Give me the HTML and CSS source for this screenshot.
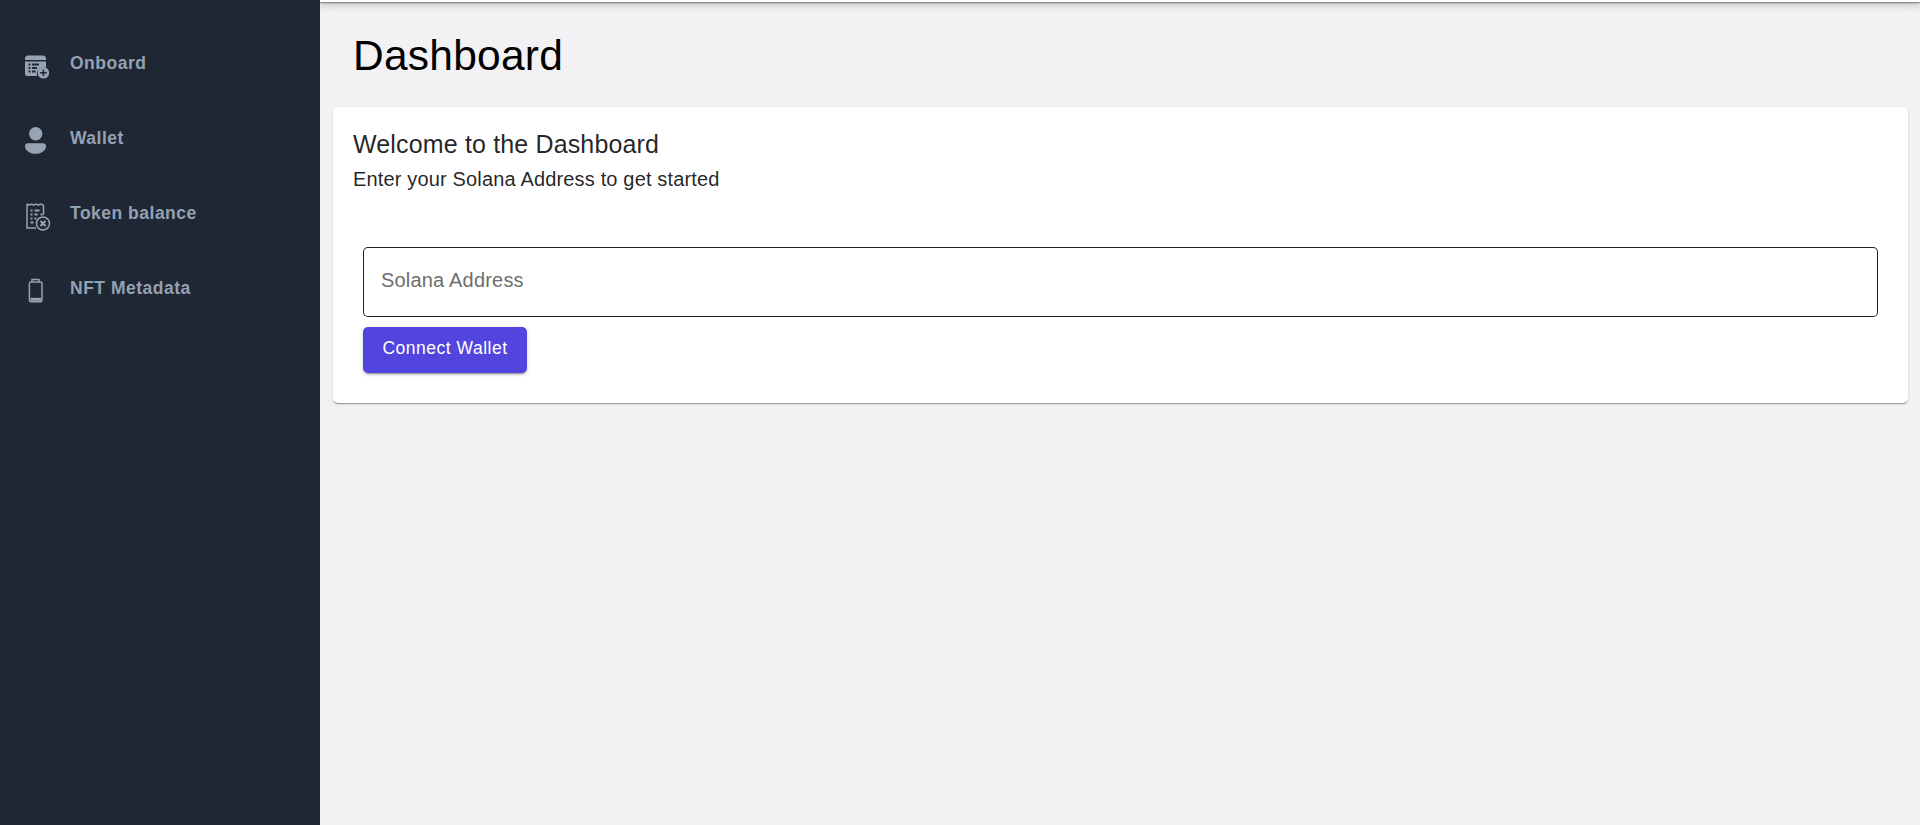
FILE: index.html
```html
<!DOCTYPE html>
<html lang="en">
<head>
<meta charset="utf-8">
<title>Dashboard</title>
<link rel="stylesheet" href="styles.css">
</head>
<body>
<div class="app">
  <nav class="sidebar">
    <a class="nav-item">
      <svg class="nav-icon" viewBox="0 0 26 26"><path class="fill" fill-rule="evenodd" transform="translate(0 1)" d="M1 4.500C1 2.500 2.500 1.500 4 1.500h15c1.500 0 3 1 3 3v1.500H1zM1 7.500h21v6.100a6.800 6.800 0 0 0-8.800 8.400H3c-1.200 0-2-.8-2-2zM4.500 9.500v2h2v-2zm3.500 0v2h7v-2zM4.500 13v2h2v-2zm3.500 0v2h5v-2zM4.500 16.500v2h2v-2zm3.500 0v2h3.500v-2z"/><path class="fill" fill-rule="evenodd" transform="translate(-.6 -.5)" d="M20 14.500a5.800 5.800 0 1 1 0 11.600 5.800 5.800 0 0 1 0-11.600zM19.200 17v2.500H16.700v1.400h2.500v2.600h1.600v-2.600h2.500v-1.400h-2.500V17z"/></svg>
      <span class="nav-label">Onboard</span>
    </a>
    <a class="nav-item">
      <svg class="nav-icon" viewBox="0 0 26 26"><circle class="fill" cx="11.700" cy="5.800" r="6.700"/><path class="fill" d="M4 15.200h15c1.800 0 3 1 3 2.800 0 4.500-4.500 7.800-10.500 7.800S1 22.500 1 18c0-1.800 1.200-2.800 3-2.800z"/></svg>
      <span class="nav-label">Wallet</span>
    </a>
    <a class="nav-item">
      <svg class="nav-icon" viewBox="0 0 26 26"><path class="stroke" d="M3 1v24h9M3 1l2.200 1.200L7.500 1l2.200 1.200L12 1l2.200 1.200L16.500 1l3 1.200V12"/><path class="fill" d="M6.500 6.500h2v2h-2zm4 0h5v2h-5zm-4 4h2v2h-2zm4 0h3v2h-3zm-4 4h2v2h-2zm4 0h2v2h-2zm-4 4h3v2h-3zm10-8h2v2h-2z"/><circle class="stroke" cx="19" cy="20.500" r="6.500"/><path class="thick" d="M16.500 18l5 5M21.500 18l-5 5"/></svg>
      <span class="nav-label">Token balance</span>
    </a>
    <a class="nav-item">
      <svg class="nav-icon" viewBox="0 0 26 26"><path class="stroke" d="M8 3.800V1.500h7v2.300"/><rect class="stroke" x="5.400" y="4" width="12.600" height="19.700" rx="1.500"/><path class="fill" d="M6.500 19.800h10.500v3H6.500z"/></svg>
      <span class="nav-label">NFT Metadata</span>
    </a>
  </nav>
  <div class="main">
    <div class="topbar"></div>
    <h1 class="page-title">Dashboard</h1>
    <section class="card">
      <h2 class="card-title">Welcome to the Dashboard</h2>
      <p class="card-subtitle">Enter your Solana Address to get started</p>
      <form class="form">
        <input class="address" type="text" placeholder="Solana Address">
        <button class="connect" type="button">Connect Wallet</button>
      </form>
    </section>
  </div>
</div>
</body>
</html>
```
FILE: styles.css
```css
* { box-sizing: border-box; }
html, body { margin: 0; height: 100%; }
body {
  font-family: "Liberation Sans", Arial, sans-serif;
  background: #f2f2f5;
  overflow: hidden;
}
.app { display: flex; height: 825px; }
.sidebar {
  width: 320px;
  flex: none;
  background: #1e2733;
  padding-top: 26px;
  display: flex;
  flex-direction: column;
  position: relative;
  z-index: 1;
}
.nav-item {
  display: flex;
  align-items: center;
  height: 75px;
  padding-left: 24px;
}
.nav-icon { width: 26px; height: 26px; margin: 4px 20px 0 0; flex: none; overflow: visible; }
.fill { fill: #97a3b3; }
.stroke { fill: none; stroke: #97a3b3; stroke-width: 1.5; }
.thick { fill: none; stroke: #97a3b3; stroke-width: 2; }
.nav-label {
  color: #94a1b3;
  font-size: 17.5px;
  font-weight: 700;
  letter-spacing: 0.5px;
}
.main { flex: 1; min-width: 0; display: flex; flex-direction: column; }
.topbar {
  height: 2px;
  background: #fff;
  box-shadow: 0 1px 2px rgba(0,0,0,.55), 0 3px 6px rgba(0,0,0,.3), 0 4px 12px rgba(0,0,0,.12);
}
.page-title {
  margin: 28px 0 0 33px;
  font-size: 42.500px;
  line-height: 52px;
  letter-spacing: 0.25px;
  font-weight: 400;
  color: #000;
}
.card {
  margin: 25px 12px 0 13px;
  height: 296px;
  background: #fff;
  border-radius: 5px;
  box-shadow: 0 2px 1px -1px rgba(0,0,0,.2), 0 1px 1px 0 rgba(0,0,0,.14), 0 1px 3px 0 rgba(0,0,0,.12);
  padding: 21px 20px 0;
}
.card-title {
  margin: 0;
  font-size: 25px;
  line-height: 32px;
  font-weight: 400;
  letter-spacing: 0.15px;
  color: rgba(0,0,0,.87);
}
.card-subtitle {
  margin: 7px 0 0;
  font-size: 20px;
  line-height: 24px;
  letter-spacing: 0.16px;
  color: rgba(0,0,0,.87);
}
.form { margin: 56px 10px 0 10px; display: flex; flex-direction: column; align-items: flex-start; gap: 10px; }
.address {
  width: 100%;
  height: 70px;
  padding: 0 17px 4px;
  border: 1px solid rgba(0,0,0,.87);
  border-radius: 5px;
  font: 400 20px "Liberation Sans", Arial, sans-serif;
  letter-spacing: 0.19px;
  background: #fff;
  outline: none;
}
.address::placeholder { color: #6e6e6e; opacity: 1; }
.connect {
  width: 164px;
  height: 46px;
  padding: 0 0 4px;
  border: 0;
  border-radius: 5px;
  background: #5145dd;
  color: #fff;
  font: 400 17.5px "Liberation Sans", Arial, sans-serif;
  letter-spacing: 0.5px;
  box-shadow: 0 3px 1px -2px rgba(0,0,0,.2), 0 2px 2px 0 rgba(0,0,0,.14), 0 1px 5px 0 rgba(0,0,0,.12);
}
```
